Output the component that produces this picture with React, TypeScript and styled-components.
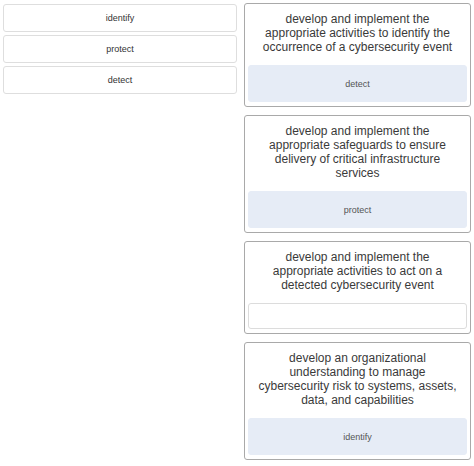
import React from "react";
import styled, { createGlobalStyle } from "styled-components";

const GlobalStyle = createGlobalStyle`
  html, body {
    margin: 0;
    padding: 0;
    background: #ffffff;
  }
  body {
    font-family: "Liberation Sans", Arial, sans-serif;
    color: #333333;
  }
`;

const Page = styled("div")`
  display: grid;
  grid-template-columns: 234px 227px;
  column-gap: 7px;
  align-items: start;
  padding: 3px 0 0 3px;
`;

const Bank = styled("div")`
  display: flex;
  flex-direction: column;
  gap: 3px;
  padding-top: 1px;
`;

const Chip = styled("div")`
  box-sizing: border-box;
  height: 28px;
  display: flex;
  align-items: center;
  justify-content: center;
  border: 1px solid #dedede;
  border-radius: 3px;
  background: #ffffff;
  font-size: 9px;
  color: #333333;
`;

const Targets = styled("div")`
  display: flex;
  flex-direction: column;
  gap: 8px;
`;

const Card = styled("div")`
  box-sizing: border-box;
  border: 1px solid #a9a9a9;
  border-radius: 3px;
  background: #ffffff;
  padding: 8px 3px 4px 3px;
`;

const Prompt = styled("div")`
  font-size: 12px;
  line-height: 14px;
  text-align: center;
  color: #3a3a3a;
  padding: 0 8px;
  margin-bottom: 11px;
`;

const Drop = styled("div")<{ $filled: boolean }>`
  box-sizing: border-box;
  height: ${(p) => (p.$filled ? "37px" : "26px")};
  display: flex;
  align-items: center;
  justify-content: center;
  border-radius: 3px;
  background: ${(p) => (p.$filled ? "#e6ecf6" : "#ffffff")};
  border: 1px solid ${(p) => (p.$filled ? "#e6ecf6" : "#dcdcdc")};
  font-size: 9px;
  color: #555555;
`;

const bank = ["identify", "protect", "detect"];

const targets = [
  {
    text: "develop and implement the appropriate activities to identify the occurrence of a cybersecurity event",
    answer: "detect",
  },
  {
    text: "develop and implement the appropriate safeguards to ensure delivery of critical infrastructure services",
    answer: "protect",
  },
  {
    text: "develop and implement the appropriate activities to act on a detected cybersecurity event",
    answer: "",
  },
  {
    text: "develop an organizational understanding to manage cybersecurity risk to systems, assets, data, and capabilities",
    answer: "identify",
  },
];

export default function App() {
  return (
    <>
      <GlobalStyle />
      <Page>
        <Bank>
          {bank.map((b) => (
            <Chip key={b}>{b}</Chip>
          ))}
        </Bank>
        <Targets>
          {targets.map((t, i) => (
            <Card key={i}>
              <Prompt>{t.text}</Prompt>
              <Drop $filled={!!t.answer}>{t.answer}</Drop>
            </Card>
          ))}
        </Targets>
      </Page>
    </>
  );
}
